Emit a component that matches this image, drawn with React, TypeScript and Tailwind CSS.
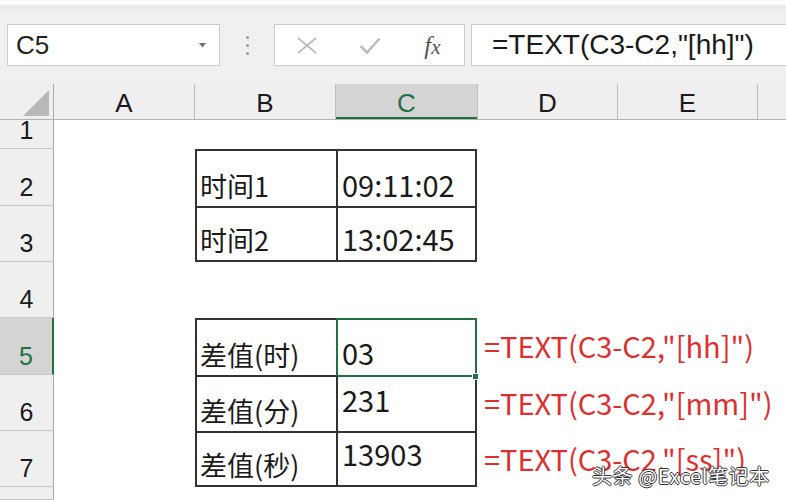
import type { ReactNode } from 'react';

const sans = "font-['Liberation_Sans',Arial,sans-serif]";
const cjk = "font-['Noto_Sans_CJK_SC','Noto_Sans',sans-serif]";
const green = 'border-[#207245]';

function RowHead({ n, active }: { n?: number; active?: boolean }) {
  return (
    <div
      className={`w-[54px] shrink-0 flex items-end justify-center pb-[5px] border-b border-[#c6c6c6] text-[25px] leading-none ${sans} ${
        active
          ? 'bg-[#d4d4d4] text-[#207245] border-r-2 border-r-[#207245]'
          : 'bg-[#efefef] text-[#1a1a1a] border-r border-r-[#a9a9a9]'
      }`}
    >
      {n}
    </div>
  );
}

function Cell({ className = '', children }: { className?: string; children?: ReactNode }) {
  return <div className={`w-[141px] shrink-0 flex ${className}`}>{children}</div>;
}

function Formula({ children }: { children: string }) {
  return (
    <Cell className="items-center pl-[7px] pb-[2px]">
      <span className={`whitespace-nowrap text-[29px] leading-none text-[#dc3030] ${cjk}`}>
        {children}
      </span>
    </Cell>
  );
}

const label = `items-end pl-[3px] text-[27px] leading-none text-[#1a1a1a] ${cjk}`;
const value = `items-end pl-[4px] text-[29px] leading-none text-[#1a1a1a] ${cjk}`;

export default function App() {
  return (
    <div className="w-[786px] h-[500px] overflow-hidden relative bg-white flex flex-col">
      {/* Formula bar */}
      <div className="h-[84px] shrink-0 flex items-start pt-[24px] bg-[linear-gradient(#fbfbfb_0px,#fbfbfb_4px,#e8e8e8_6px,#f0f0f0_14px)]">
        <div className="ml-[7px] w-[213px] h-[42px] bg-white border border-[#cdcdcd] flex items-center justify-between pl-[8px] pr-[13px]">
          <span className={`text-[26px] leading-none text-[#222] ${sans}`}>C5</span>
          <svg width="7" height="5" viewBox="0 0 7 5">
            <polygon points="0,0 7,0 3.5,4.5" fill="#6f6f6f" />
          </svg>
        </div>
        <div className="w-[54px] h-[42px] flex flex-col items-center justify-center gap-[5px]">
          <span className="w-[3px] h-[3px] rounded-full bg-[#9a9a9a]" />
          <span className="w-[3px] h-[3px] rounded-full bg-[#9a9a9a]" />
          <span className="w-[3px] h-[3px] rounded-full bg-[#9a9a9a]" />
        </div>
        <div className="w-[191px] h-[42px] bg-white border border-[#cdcdcd] flex items-center">
          <div className="w-[64px] flex justify-center">
            <svg width="20" height="17" viewBox="0 0 20 17">
              <path d="M1 1L19 16M19 1L1 16" stroke="#bdbdbd" strokeWidth="1.8" fill="none" />
            </svg>
          </div>
          <div className="w-[63px] flex justify-center">
            <svg width="22" height="17" viewBox="0 0 22 17">
              <path d="M1.5 9L8 15.5L20.5 1.5" stroke="#bdbdbd" strokeWidth="2.6" fill="none" />
            </svg>
          </div>
          <div className="w-[64px] flex justify-center">
            <span className="font-['Liberation_Serif',serif] italic text-[25px] leading-none text-[#555]">
              f<span className="text-[21px]">x</span>
            </span>
          </div>
        </div>
        <div className="ml-[6px] flex-1 h-[42px] bg-white border border-r-0 border-[#cdcdcd] flex items-center pl-[20px]">
          <span className={`whitespace-nowrap text-[28px] leading-none text-[#1a1a1a] ${sans}`}>
            {'=TEXT(C3-C2,"[hh]")'}
          </span>
        </div>
      </div>

      {/* Column headers */}
      <div className={`h-[36px] shrink-0 flex bg-[#efefef] border-b border-[#b2b2b2] text-[26px] leading-none ${sans}`}>
        <div className="w-[54px] shrink-0 flex items-end justify-end pr-[4px] pb-[3px] border-r border-[#a9a9a9]">
          <svg width="26" height="26" viewBox="0 0 26 26">
            <polygon points="26,0 26,26 0,26" fill="#b9b9b9" />
          </svg>
        </div>
        {['A', 'B'].map((c) => (
          <div key={c} className="w-[141px] shrink-0 flex items-end justify-center pb-[3px] border-r border-[#bdbdbd] text-[#1a1a1a]">
            {c}
          </div>
        ))}
        <div className="w-[141px] shrink-0 flex items-end justify-center pb-[1px] bg-[#d4d4d4] border-b-2 border-[#207245] text-[#207245]">
          C
        </div>
        <div className="w-[141px] shrink-0 flex items-end justify-center pb-[3px] border-r border-l border-[#bdbdbd] text-[#1a1a1a]">
          D
        </div>
        <div className="w-[140px] shrink-0 flex items-end justify-center pb-[3px] border-r border-[#bdbdbd] text-[#1a1a1a]">
          E
        </div>
        <div className="flex-1" />
      </div>

      {/* Row 1 */}
      <div className="h-[29px] shrink-0 flex">
        <RowHead n={1} />
      </div>

      {/* Rows 2-3: input times */}
      <div className="h-[57px] shrink-0 flex">
        <RowHead n={2} />
        <Cell />
        <Cell className={`${label} pb-[7px] border-l-2 border-t-2 border-[#333]`}>时间1</Cell>
        <Cell className={`${value} pb-[7px] border-l-2 border-t-2 border-r-2 border-[#333]`}>09:11:02</Cell>
      </div>
      <div className="h-[56px] shrink-0 flex">
        <RowHead n={3} />
        <Cell />
        <Cell className={`${label} pb-[7px] border-l-2 border-t-2 border-b-2 border-[#333]`}>时间2</Cell>
        <Cell className={`${value} pb-[7px] border-l-2 border-t-2 border-r-2 border-b-2 border-[#333]`}>13:02:45</Cell>
      </div>

      {/* Row 4 */}
      <div className="h-[56px] shrink-0 flex">
        <RowHead n={4} />
      </div>

      {/* Rows 5-7: differences */}
      <div className="h-[57px] shrink-0 flex">
        <RowHead n={5} active />
        <Cell />
        <Cell className={`${label} pb-[7px] border-l-2 border-t-2 border-[#333]`}>差值(时)</Cell>
        <Cell className={`${value} pb-[8px] relative border-l-2 border-t-2 border-r-2 ${green}`}>
          03
          <span className="absolute right-[-4px] bottom-[-5px] w-[7px] h-[7px] bg-[#207245] border border-white" />
        </Cell>
        <Formula>{'=TEXT(C3-C2,"[hh]")'}</Formula>
      </div>
      <div className="h-[56px] shrink-0 flex">
        <RowHead n={6} />
        <Cell />
        <Cell className={`${label} pb-[7px] border-l-2 border-t-2 border-[#333]`}>差值(分)</Cell>
        <Cell className={`${value} pb-[17px] border-l-2 border-t-2 border-r-2 border-[#333] border-t-[#207245]`}>231</Cell>
        <Formula>{'=TEXT(C3-C2,"[mm]")'}</Formula>
      </div>
      <div className="h-[56px] shrink-0 flex">
        <RowHead n={7} />
        <Cell />
        <Cell className={`${label} pb-[7px] border-l-2 border-t-2 border-b-2 border-[#333]`}>差值(秒)</Cell>
        <Cell className={`${value} pb-[17px] border-l-2 border-t-2 border-r-2 border-b-2 border-[#333]`}>13903</Cell>
        <Formula>{'=TEXT(C3-C2,"[ss]")'}</Formula>
      </div>

      {/* Row 8 */}
      <div className="flex-1 flex">
        <RowHead />
      </div>

      <div
        className={`absolute left-[592px] top-[466px] whitespace-nowrap text-[20px] leading-none tracking-[0.6px] text-white ${cjk} [text-shadow:1px_0_#333,-1px_0_#333,0_1px_#333,0_-1px_#333]`}
      >
        头条 @Excel笔记本
      </div>
    </div>
  );
}
